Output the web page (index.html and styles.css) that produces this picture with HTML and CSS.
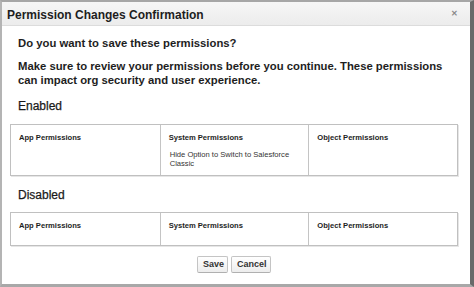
FILE: index.html
```html
<!DOCTYPE html>
<html>
<head>
<meta charset="utf-8">
<link rel="stylesheet" href="styles.css">
</head>
<body>
<div class="dialog">
  <div class="header">
    <h2 class="title">Permission Changes Confirmation</h2>
    <span class="close">&#x2715;</span>
  </div>
  <div class="body">
    <p class="question">Do you want to save these permissions?</p>
    <p class="warning">Make sure to review your permissions before you continue. These permissions can impact org security and user experience.</p>
    <h3 class="section">Enabled</h3>
    <div class="perm-table enabled">
      <div class="cell"><div class="cell-head">App Permissions</div></div>
      <div class="cell"><div class="cell-head">System Permissions</div><div class="cell-item">Hide Option to Switch to Salesforce Classic</div></div>
      <div class="cell"><div class="cell-head">Object Permissions</div></div>
    </div>
    <h3 class="section disabled-title">Disabled</h3>
    <div class="perm-table disabled">
      <div class="cell"><div class="cell-head">App Permissions</div></div>
      <div class="cell"><div class="cell-head">System Permissions</div></div>
      <div class="cell"><div class="cell-head">Object Permissions</div></div>
    </div>
    <div class="buttons">
      <button class="btn save">Save</button>
      <button class="btn cancel">Cancel</button>
    </div>
  </div>
</div>
</body>
</html>
```

FILE: styles.css
```css
html, body {
  margin: 0;
  padding: 0;
}
body {
  width: 474px;
  height: 287px;
  overflow: hidden;
  font-family: "Liberation Sans", Arial, sans-serif;
  color: #222;
  background: #9a9a9a;
}
.dialog {
  box-sizing: border-box;
  width: 474px;
  height: 287px;
  border-left: 2px solid #b4b4b4;
  border-top: 2px solid #a6a6a6;
  border-right: 4px solid #6a6a6a;
  border-bottom: 3px solid #a8a8a8;
  background: #fff;
  display: flex;
  flex-direction: column;
}
.header {
  height: 23px;
  border-bottom: 1px solid #dcdcdc;
  background: linear-gradient(#f6f6f6, #ececec);
  display: flex;
  align-items: center;
  justify-content: space-between;
  padding: 0 12px 0 5px;
}
.title {
  margin: 0;
  font-size: 12px;
  font-weight: bold;
  color: #1e1e1e;
  line-height: 14px;
  position: relative;
  top: 1px;
}
.close {
  font-size: 8px;
  color: #8a8a8a;
  font-weight: bold;
  line-height: 10px;
}
.body {
  padding: 10px 12px 0 8px;
  display: flex;
  flex-direction: column;
}
.question, .warning {
  margin: 0 0 0 8px;
  font-size: 11.3px;
  font-weight: bold;
  line-height: 14px;
  color: #1e1e1e;
}
.warning {
  margin-top: 9px;
}
.section {
  margin: 12px 0 0 8px;
  font-size: 12px;
  font-weight: normal;
  line-height: 14px;
  color: #1a1a1a;
  -webkit-text-stroke: 0.25px #1a1a1a;
}
.perm-table {
  margin-top: 11px;
  display: grid;
  grid-template-columns: 1fr 1fr 1fr;
  border: 1px solid #c0c0c0;
  box-shadow: 1px 1px 0 #e6e6e6;
}
.perm-table.enabled {
  height: 50px;
}
.perm-table.disabled {
  height: 32px;
  margin-top: 10px;
}
.disabled-title {
  margin-top: 12px;
}
.cell {
  padding: 8px 8px 0 8px;
  border-left: 1px solid #c4c4c4;
}
.cell:first-child {
  border-left: none;
}
.cell-head {
  font-size: 7.6px;
  font-weight: bold;
  line-height: 9px;
  color: #1e1e1e;
}
.cell-item {
  margin-top: 8px;
  padding-left: 1px;
  font-size: 7.6px;
  line-height: 9px;
  color: #333;
  width: 125px;
}
.buttons {
  margin-top: 10px;
  display: flex;
  justify-content: center;
  gap: 3px;
}
.btn {
  font-family: "Liberation Sans", Arial, sans-serif;
  font-size: 9px;
  font-weight: bold;
  color: #333;
  height: 17px;
  padding: 0 5px;
  border: 1px solid #c4c4c4;
  border-bottom-color: #b0b0b0;
  border-radius: 2px;
  background: linear-gradient(#ffffff, #ededed);
  line-height: 15px;
}
.save {
  width: 31px;
}
.cancel {
  width: 40px;
}
```
